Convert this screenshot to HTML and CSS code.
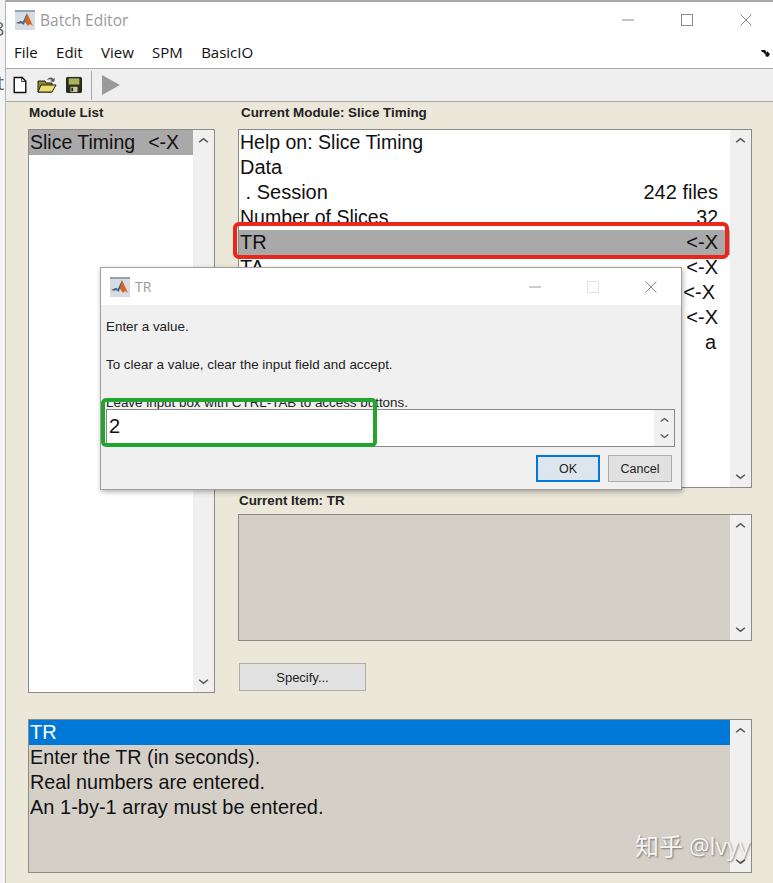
FILE: index.html
```html
<!DOCTYPE html>
<html lang="en">
<head>
<meta charset="utf-8">
<title>Batch Editor</title>
<link rel="stylesheet" href="styles.css">
</head>
<body>
<div class="desk">
  <div class="behind"><span class="behind-8">8</span><span class="behind-t">t</span></div>
  <div class="window">
    <header class="titlebar">
      <svg class="logo" viewBox="0 0 20 20"><rect width="20" height="20" fill="#d5dde4"/><rect width="20" height="2" fill="#8fa3b5"/><path d="M1 13l5-2 2 1 4-9 6 13-3-2-2 2-3-4-3 1-3 1z" fill="#d8641f"/><path d="M1 13l5-2 2 1 4-9-3 12-3-2z" fill="#2f6ea8"/></svg>
      <span class="title">Batch Editor</span>
      <div class="wincontrols">
        <svg class="wc" viewBox="0 0 12 12"><path d="M0 6h12" stroke="#8a8a8a"/></svg>
        <svg class="wc" viewBox="0 0 12 12"><rect x=".5" y=".5" width="11" height="11" fill="none" stroke="#8a8a8a"/></svg>
        <svg class="wc" viewBox="0 0 12 12"><path d="M.5.5l11 11M11.5.5l-11 11" stroke="#8a8a8a"/></svg>
      </div>
    </header>
    <nav class="menubar">
      <span>File</span><span>Edit</span><span>View</span><span>SPM</span><span>BasicIO</span>
      <svg class="menu-arrow" viewBox="0 0 10 8"><path d="M0 1h4l2 3V2l3 3-2 3-3-1 1-1-3-3H1z" fill="#111"/></svg>
    </nav>
    <div class="toolbar">
      <svg class="tool" viewBox="0 0 18 20"><path d="M2.500 1.500h9l4 4v13h-13z" fill="#fff" stroke="#111" stroke-width="1.600"/><path d="M11 1.500v4.500h4.500" fill="none" stroke="#111"/></svg>
      <svg class="tool tool-open" viewBox="0 0 20 18"><path d="M1 5h7l1 2h6v9H1z" fill="#8d8a1e" stroke="#222"/><path d="M1 16l3-7h15l-4 7z" fill="#ecdc6a" stroke="#222"/><path d="M10 4c2-3 5-3 6-1l2-1-1 4-4-1 2-1c-1-1-3-1-5 0z" fill="#555"/></svg>
      <svg class="tool" viewBox="0 0 18 18"><rect x=".5" y=".5" width="17" height="17" rx="1" fill="#2f2f12" stroke="#111"/><rect x="3" y="1.500" width="12" height="7" fill="#a9b25a"/><rect x="5" y="11" width="8" height="6" fill="#c9c9a8"/><rect x="6" y="12" width="2" height="4" fill="#222"/></svg>
      <span class="tool-sep"></span>
      <svg class="tool tool-run" viewBox="0 0 18 20"><path d="M0 0l18 10L0 20z" fill="#9a9a9a"/></svg>
    </div>
    <main class="content">
      <div class="columns">
        <section class="col-left">
          <h2 class="label">Module List</h2>
          <div class="listbox grow">
            <div class="list-body">
              <div class="row tight selected-gray row-short"><span>Slice Timing</span><span class="mark">&lt;-X</span></div>
            </div>
            <div class="scrollbar">
              <svg class="chev" viewBox="0 0 12 8"><path d="M1 6l5-4 5 4" fill="none" stroke="#555" stroke-width="1.800"/></svg>
              <svg class="chev" viewBox="0 0 12 8"><path d="M1 2l5 4 5-4" fill="none" stroke="#555" stroke-width="1.800"/></svg>
            </div>
          </div>
        </section>
        <section class="col-right">
          <h2 class="label">Current Module: Slice Timing</h2>
          <div class="listbox module-box">
            <div class="list-body">
              <div class="row tight">Help on: Slice Timing</div>
              <div class="row">Data</div>
              <div class="row split"><span>&nbsp;. Session</span><span>242 files</span></div>
              <div class="row split tight"><span>Number of Slices</span><span>32</span></div>
              <div class="row split selected-gray"><span>TR</span><span>&lt;-X</span></div>
              <div class="row split"><span>TA</span><span>&lt;-X</span></div>
              <div class="row split shift"><span>Slice order</span><span>&lt;-X</span></div>
              <div class="row split"><span>Reference Slice</span><span>&lt;-X</span></div>
              <div class="row split"><span>Filename Prefix</span><span class="val-a">a</span></div>
            </div>
            <div class="scrollbar">
              <svg class="chev" viewBox="0 0 12 8"><path d="M1 6l5-4 5 4" fill="none" stroke="#555" stroke-width="1.800"/></svg>
              <svg class="chev" viewBox="0 0 12 8"><path d="M1 2l5 4 5-4" fill="none" stroke="#555" stroke-width="1.800"/></svg>
            </div>
          </div>
          <h2 class="label label-item">Current Item: TR</h2>
          <div class="listbox item-box">
            <div class="list-body gray-body"></div>
            <div class="scrollbar">
              <svg class="chev" viewBox="0 0 12 8"><path d="M1 6l5-4 5 4" fill="none" stroke="#555" stroke-width="1.800"/></svg>
              <svg class="chev" viewBox="0 0 12 8"><path d="M1 2l5 4 5-4" fill="none" stroke="#555" stroke-width="1.800"/></svg>
            </div>
          </div>
          <button class="specify" type="button">Specify...</button>
        </section>
      </div>
      <div class="listbox help-box">
        <div class="list-body gray-body">
          <div class="row selected-blue">TR</div>
          <div class="row mid">Enter the TR (in seconds).</div>
          <div class="row mid">Real numbers are entered.</div>
          <div class="row">An 1-by-1 array must be entered.</div>
        </div>
        <div class="scrollbar">
          <svg class="chev" viewBox="0 0 12 8"><path d="M1 6l5-4 5 4" fill="none" stroke="#555" stroke-width="1.800"/></svg>
          <svg class="chev" viewBox="0 0 12 8"><path d="M1 2l5 4 5-4" fill="none" stroke="#555" stroke-width="1.800"/></svg>
        </div>
      </div>
    </main>
  </div>
</div>

<div class="annot-red"></div>

<div class="dialog">
  <header class="dlg-title">
    <svg class="logo" viewBox="0 0 20 20"><rect width="20" height="20" fill="#d5dde4"/><rect width="20" height="2" fill="#8fa3b5"/><path d="M1 13l5-2 2 1 4-9 6 13-3-2-2 2-3-4-3 1-3 1z" fill="#d8641f"/><path d="M1 13l5-2 2 1 4-9-3 12-3-2z" fill="#2f6ea8"/></svg>
    <span class="title dlg-name">TR</span>
    <div class="dlg-controls">
      <svg class="wc" viewBox="0 0 12 12"><path d="M0 6h12" stroke="#9a9a9a"/></svg>
      <svg class="wc" viewBox="0 0 12 12"><rect x=".5" y=".5" width="11" height="11" fill="none" stroke="#e2e2e2"/></svg>
      <svg class="wc" viewBox="0 0 12 12"><path d="M.5.5l11 11M11.500.5l-11 11" stroke="#8a8a8a"/></svg>
    </div>
  </header>
  <div class="dlg-body">
    <p class="dlg-text">Enter a value.</p>
    <p class="dlg-text">To clear a value, clear the input field and accept.</p>
    <p class="dlg-text">Leave input box with CTRL-TAB to access buttons.</p>
    <div class="dlg-input">
      <span class="dlg-value">2</span>
      <div class="spin">
        <svg class="chev-small" viewBox="0 0 12 8"><path d="M1 6l5-4 5 4" fill="none" stroke="#555" stroke-width="1.800"/></svg>
        <svg class="chev-small" viewBox="0 0 12 8"><path d="M1 2l5 4 5-4" fill="none" stroke="#555" stroke-width="1.800"/></svg>
      </div>
    </div>
    <div class="dlg-buttons">
      <button class="btn btn-ok" type="button">OK</button>
      <button class="btn" type="button">Cancel</button>
    </div>
  </div>
</div>

<div class="annot-green"></div>
<div class="watermark"><span class="wm-cjk">知乎</span> @lvyy</div>
</body>
</html>
```
FILE: styles.css
```css
* { box-sizing: border-box; }
html, body { margin: 0; padding: 0; }
body {
  width: 773px;
  height: 883px;
  overflow: hidden;
  position: relative;
  background: #ebe8d9;
  font-family: "Liberation Sans", Arial, sans-serif;
  color: #111;
}
.desk { display: flex; height: 883px; }
.behind {
  width: 6px;
  flex: none;
  background: #f4f4f4;
  border-right: 1px solid #b5b5b5;
  overflow: hidden;
  font-family: "Open Sans", sans-serif;
  font-size: 20px;
  color: #666;
  display: flex;
  flex-direction: column;
  padding-top: 16px;
  line-height: 26px;
}
.behind-8 { margin-left: -7px; }
.behind-t { margin-top: 28px; margin-left: -3px; }
.window { flex: 1; min-width: 0; display: flex; flex-direction: column; border-top: 2px solid #a8a8a8; }
.titlebar { height: 34px; background: #fff; display: flex; align-items: center; padding: 1px 0 0 9px; flex: none; }
.logo { width: 20px; height: 20px; flex: none; }
.title { font-family: "Open Sans", sans-serif; font-size: 15.500px; color: #9a9a9a; margin-left: 5px; }
.wincontrols { margin-left: auto; display: flex; gap: 47px; padding-right: 21px; align-items: center; }
.wc { width: 12px; height: 12px; display: block; }
.menubar {
  height: 33px;
  background: #fff;
  border-bottom: 1px solid #a8a8a8;
  display: flex;
  align-items: center;
  gap: 18.300px;
  padding: 0 0 0 8px;
  font-family: "Open Sans", sans-serif;
  font-size: 15px;
  color: #111;
  flex: none;
}
.menu-arrow { width: 10px; height: 8px; margin-left: auto; margin-right: 2px; margin-top: 2px; }
.toolbar {
  height: 33px;
  background: #efefef;
  border-bottom: 1px solid #a8a8a8;
  display: flex;
  align-items: center;
  padding-left: 6px;
  gap: 9px;
  flex: none;
}
.tool { width: 16px; height: 18px; display: block; }
.tool-open { width: 20px; }
.tool-sep { width: 1px; height: 29px; background: #a8a8a8; }
.tool-run { width: 18px; height: 20px; margin-left: 1px; }
.content { flex: 1; min-height: 0; padding: 3px 21px 10px 22px; display: flex; flex-direction: column; }
.columns { display: flex; gap: 23px; height: 588px; flex: none; }
.col-left { width: 187px; display: flex; flex-direction: column; flex: none; }
.col-right { flex: 1; min-width: 0; display: flex; flex-direction: column; align-items: stretch; }
.label { margin: 0; height: 24px; font-size: 13.400px; line-height: 16px; font-weight: bold; color: #222; padding-left: 1px; flex: none; }
.col-right .label { padding-left: 3px; }
.col-right .label-item { height: 26px; padding: 5px 0 0 1px; line-height: 16px; }
.listbox { display: flex; border: 1px solid #8a8a8a; background: #fff; }
.grow { height: 564px; flex: none; }
.module-box { height: 359px; flex: none; }
.item-box { height: 127px; flex: none; }
.help-box { height: 154px; margin-top: 26px; flex: none; }
.list-body { flex: 1; min-width: 0; font-size: 20px; line-height: 25px; background: #fff; }
.gray-body { background: #d4d0c8; }
.row { height: 25px; padding: 0 15px 0 1px; white-space: nowrap; }
.tight { font-size: 19.500px; }
.mid { font-size: 19.750px; }
.row-short { display: flex; gap: 13px; padding-right: 0; }
.split { display: flex; justify-content: space-between; padding-right: 12px; }
.shift { padding-right: 15px; }
.val-a { padding-right: 2px; }
.selected-gray { background: #a9a9a9; }
.selected-blue { background: #0078d7; color: #fff; }
.scrollbar {
  width: 21px;
  flex: none;
  background: #f0f0f0;
  display: flex;
  flex-direction: column;
  justify-content: space-between;
  align-items: center;
  padding: 7px 0 7px;
}
.chev { width: 11px; height: 7px; display: block; }
.specify {
  width: 127px;
  height: 28px;
  margin-top: 22px;
  margin-left: 1px;
  background: #e1e1e1;
  border: 1px solid #adadad;
  font: 13px "Liberation Sans", Arial, sans-serif;
  color: #222;
  padding: 0;
}
.annot-red {
  position: absolute;
  left: 233px;
  top: 222px;
  width: 496px;
  height: 37px;
  border: 4px solid #e9271d;
  border-radius: 6px;
}
.dialog {
  position: absolute;
  left: 100px;
  top: 267px;
  width: 582px;
  height: 223px;
  background: #f0f0f0;
  border: 1px solid #a0a0a0;
  box-shadow: 1px 2px 5px rgba(0,0,0,.3);
  display: flex;
  flex-direction: column;
}
.dlg-title { height: 37px; background: #fff; display: flex; align-items: center; padding-left: 9px; flex: none; }
.dlg-name { margin-left: 5px; font-size: 14px; }
.dlg-controls { margin-left: auto; display: flex; gap: 46px; padding-right: 24px; align-items: center; }
.dlg-body { flex: 1; padding: 14px 6px 0 5px; display: flex; flex-direction: column; }
.dlg-text { margin: 0 0 23px; font-size: 13.400px; line-height: 15px; height: 15px; color: #222; white-space: nowrap; }
.dlg-text:nth-child(3) { margin-bottom: 0; }
.dlg-input {
  height: 38px;
  margin-top: -1px;
  background: #fff;
  border: 1px solid #8a8a8a;
  display: flex;
  align-items: center;
  justify-content: space-between;
  flex: none;
}
.dlg-value { font-size: 20px; line-height: 25px; padding-left: 2px; color: #111; margin-top: -4px; }
.spin { width: 20px; height: 100%; background: #f0f0f0; display: flex; flex-direction: column; justify-content: space-between; align-items: center; padding: 7px 0 7px; }
.chev-small { width: 9px; height: 6px; display: block; }
.dlg-buttons { display: flex; justify-content: flex-end; gap: 8px; margin-top: 8px; padding-right: 3px; }
.btn {
  width: 64px;
  height: 27px;
  background: #e1e1e1;
  border: 1px solid #adadad;
  font: 12.500px "Liberation Sans", Arial, sans-serif;
  color: #222;
  padding: 0;
}
.btn-ok { border: 2px solid #0078d7; background: #dde6ee; }
.annot-green {
  position: absolute;
  left: 101px;
  top: 398px;
  width: 276px;
  height: 49px;
  border: 4px solid #22a52e;
  border-radius: 5px;
}
.watermark {
  position: absolute;
  left: 635px;
  top: 830px;
  font-family: "Open Sans", "Noto Sans CJK SC", sans-serif;
  font-size: 23px;
  line-height: 30px;
  color: #f4f4f4;
  text-shadow: 1px 1px 2px rgba(0,0,0,.45);
  white-space: nowrap;
}
.wm-cjk { font-family: "Noto Sans CJK SC", sans-serif; font-size: 24px; }
```
